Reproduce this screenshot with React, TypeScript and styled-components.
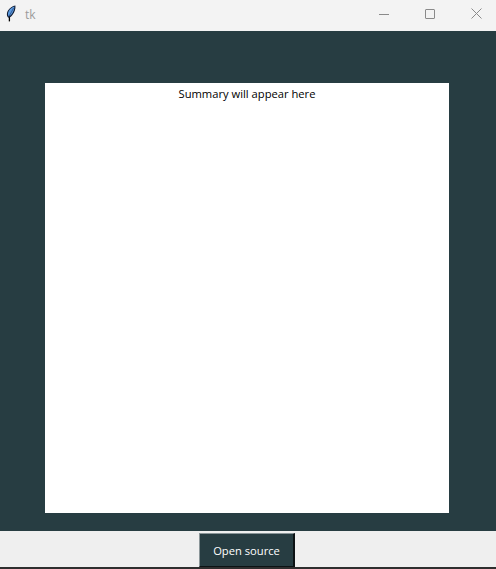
import React from 'react'
import styled, { createGlobalStyle } from 'styled-components'

const GlobalStyle = createGlobalStyle`
  html, body {
    margin: 0;
    padding: 0;
    background: #f0f0f0;
  }
`

const Window = styled.div`
  width: 496px;
  height: 569px;
  display: flex;
  flex-direction: column;
  overflow: hidden;
  font-family: 'Open Sans', 'Noto Sans', 'Liberation Sans', sans-serif;
  font-size: 11.2px;
`

const TitleBar = styled.div`
  height: 31px;
  flex: none;
  display: flex;
  align-items: center;
  background: #f3f3f3;
  padding-left: 5px;
`

const AppIcon = styled.svg`
  width: 12px;
  height: 18px;
  margin-top: -4px;
  flex: none;
`

const Title = styled.span`
  margin-left: 8px;
  margin-top: -3px;
  color: #9b9b9b;
  font-size: 12px;
`

const WindowControls = styled.div`
  margin-left: auto;
  margin-right: -3px;
  display: flex;
  height: 100%;
`

const ControlButton = styled.div`
  width: 46px;
  height: 27px;
  display: flex;
  align-items: center;
  justify-content: center;
`

const Main = styled.div`
  height: 500px;
  flex: none;
  background: #273d42;
  padding: 52px 47px 18px 45px;
  box-sizing: border-box;
`

const SummaryBox = styled.div`
  height: 430px;
  background: #ffffff;
  color: #000000;
  text-align: center;
  line-height: 21px;
`

const Footer = styled.div`
  flex: 1;
  background: #efefef;
  display: flex;
  justify-content: center;
  padding-top: 2px;
  box-sizing: border-box;
  border-bottom: 2px solid #2e2e2e;
`

const SourceButton = styled.button`
  width: 96px;
  height: 34px;
  margin: 0 2px 0 0;
  padding: 0;
  background: #273d42;
  color: #ffffff;
  font: inherit;
  border-style: solid;
  border-width: 1px 2px 1px 1px;
  border-color: #8a9598 #0c1214 #0c1214 #8a9598;
`

const App = () => {
  return (
    <Window>
      <GlobalStyle />
      <TitleBar>
        <AppIcon viewBox="0 0 12 18">
          <path d="M4.4 16.4 L4.4 12" stroke="#000" strokeWidth="1.3" fill="none" />
          <path d="M3.6 12.8 C1.6 11.6 1.4 8 3 5.4 C4.6 2.8 7.6 0.8 10.4 0.4 C10.8 3.6 9.6 7.4 7.6 9.8 C6.6 11.2 5.4 12.4 3.6 12.8 Z" fill="#101a30" />
          <path d="M3.8 11.6 C2.6 10 2.6 7.8 4 5.6 C5.4 3.6 7.4 2.2 9.4 1.6 C9.4 4.2 8.4 7 6.8 9 C5.8 10.2 5 11 3.8 11.6 Z" fill="#5b9be0" />
          <path d="M4.2 11 L8.6 3" stroke="#16306a" strokeWidth="0.6" fill="none" />
        </AppIcon>
        <Title>tk</Title>
        <WindowControls>
          <ControlButton>
            <svg width="10" height="10" viewBox="0 0 10 10">
              <path d="M0 5.5 H10" stroke="#8a8a8a" strokeWidth="1" />
            </svg>
          </ControlButton>
          <ControlButton>
            <svg width="10" height="10" viewBox="0 0 10 10">
              <rect x="0.5" y="0.5" width="9" height="9" rx="0.5" fill="none" stroke="#8a8a8a" strokeWidth="1" />
            </svg>
          </ControlButton>
          <ControlButton>
            <svg width="11" height="11" viewBox="0 0 11 11">
              <path d="M0.5 0.5 L10.5 10.5 M10.5 0.5 L0.5 10.5" stroke="#8a8a8a" strokeWidth="1" />
            </svg>
          </ControlButton>
        </WindowControls>
      </TitleBar>
      <Main>
        <SummaryBox>Summary will appear here</SummaryBox>
      </Main>
      <Footer>
        <SourceButton>Open source</SourceButton>
      </Footer>
    </Window>
  )
}

export default App
